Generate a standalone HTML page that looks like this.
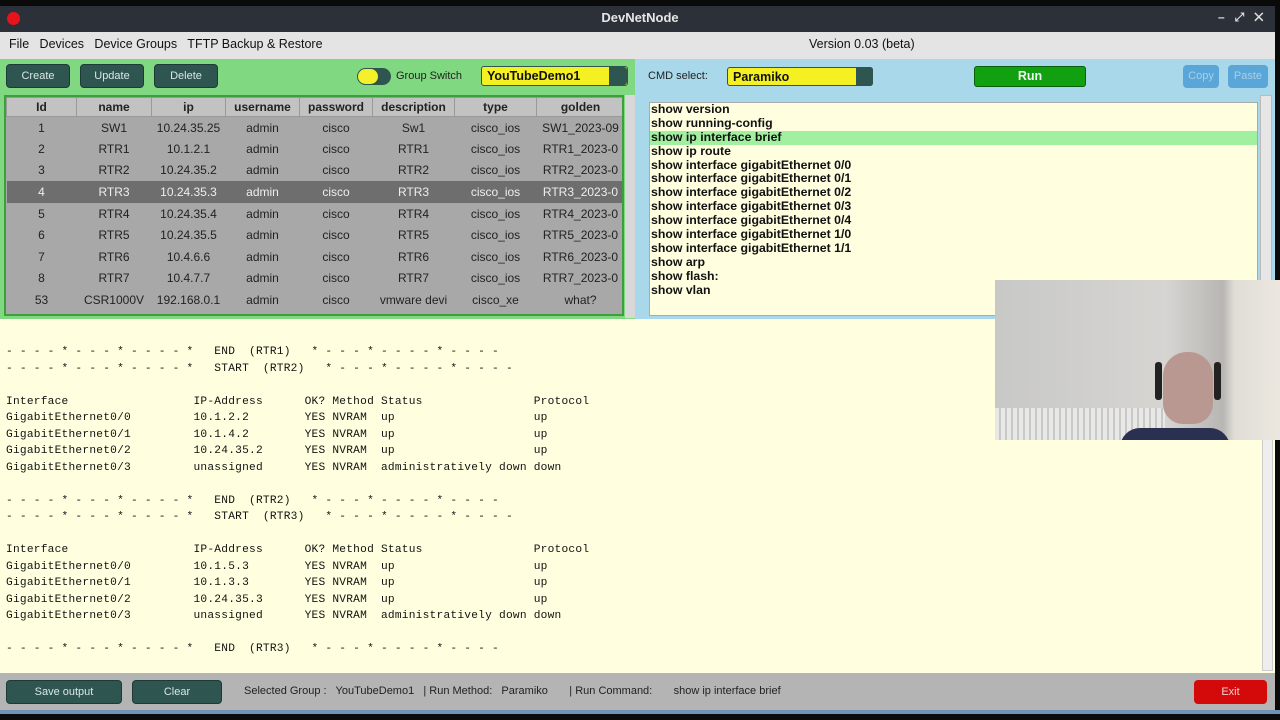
<!DOCTYPE html>
<html><head><meta charset="utf-8"><style>
*{margin:0;padding:0;box-sizing:border-box}
body{width:1280px;height:720px;overflow:hidden;background:#0a0a0a;font-family:"Liberation Sans",sans-serif;position:relative}
.abs{position:absolute}
.btn{position:absolute;background:#2f5550;color:#d8e8e4;font-size:11px;text-align:center;border-radius:4px;border:1px solid #1e3a36}
table{border-collapse:collapse}
td{font-size:12px;color:#222;text-align:center;height:21.6px;white-space:nowrap;overflow:hidden}
th{font-size:12px;font-weight:bold;color:#222;background:#c2c2c2;height:19px;border:1px solid #999}
.cmd div{height:13.9px;line-height:13.9px;font-weight:bold;font-size:12.3px;color:#111;padding-left:1px}
pre{font-family:"Liberation Mono",monospace;font-size:11.2px;line-height:16.5px;color:#111;letter-spacing:0.23px}
</style></head><body>
<div class="abs" style="left:0;top:6px;width:1275px;height:26px;background:#2c3038"></div>
<div class="abs" style="left:7px;top:12px;width:13px;height:13px;border-radius:50%;background:#e8121a"></div>
<div class="abs" style="left:0;top:10px;width:1280px;text-align:center;color:#e6e6e6;font-weight:bold;font-size:13px">DevNetNode</div>
<div class="abs" style="left:1218px;top:10px;color:#ddd;font-size:12px;font-weight:bold;white-space:nowrap">–&nbsp;&nbsp;&nbsp;⤢&nbsp;&nbsp;&nbsp;✕</div>
<div class="abs" style="left:0;top:32px;width:1275px;height:27px;background:#e4e4e4"></div>
<div class="abs" style="left:9px;top:37px;font-size:12.5px;color:#111;white-space:pre">File   Devices   Device Groups   TFTP Backup &amp; Restore</div>
<div class="abs" style="left:809px;top:37px;font-size:12.5px;color:#111">Version 0.03 (beta)</div>
<!-- left panel -->
<div class="abs" style="left:0;top:59px;width:635px;height:260px;background:#80d880"></div>
<div class="btn" style="left:6px;top:64px;width:64px;height:24px;line-height:22px">Create</div>
<div class="btn" style="left:80px;top:64px;width:64px;height:24px;line-height:22px">Update</div>
<div class="btn" style="left:154px;top:64px;width:64px;height:24px;line-height:22px">Delete</div>
<div class="abs" style="left:357px;top:68px;width:34px;height:17px;border-radius:9px;background:#2f5550"></div>
<div class="abs" style="left:358px;top:69px;width:20px;height:15px;border-radius:8px;background:#f4f02a"></div>
<div class="abs" style="left:396px;top:69px;font-size:11px;color:#222;line-height:14px">Group Switch</div>
<div class="abs" style="left:481px;top:66px;width:147px;height:20px;background:#f4f022;border:1px solid #2f5550;border-radius:3px;font-size:12.5px;font-weight:bold;padding:2px 5px;color:#111">YouTubeDemo1</div>
<div class="abs" style="left:609px;top:67px;width:18px;height:18px;background:#2f5550;border-radius:0 3px 3px 0"></div>
<div class="abs" style="left:4px;top:95px;width:620px;height:221px;background:#a8a8a8;border:2px solid #3e9e3e;overflow:hidden">
<table style="width:618px;table-layout:fixed">
<colgroup><col style="width:70px"><col style="width:75px"><col style="width:74px"><col style="width:74px"><col style="width:73px"><col style="width:82px"><col style="width:82px"><col style="width:88px"></colgroup>
<tr><th>Id</th><th>name</th><th>ip</th><th>username</th><th>password</th><th>description</th><th>type</th><th>golden</th></tr>
<tr><td>1</td><td>SW1</td><td>10.24.35.25</td><td>admin</td><td>cisco</td><td>Sw1</td><td>cisco_ios</td><td>SW1_2023-09</td></tr>
<tr><td>2</td><td>RTR1</td><td>10.1.2.1</td><td>admin</td><td>cisco</td><td>RTR1</td><td>cisco_ios</td><td>RTR1_2023-0</td></tr>
<tr><td>3</td><td>RTR2</td><td>10.24.35.2</td><td>admin</td><td>cisco</td><td>RTR2</td><td>cisco_ios</td><td>RTR2_2023-0</td></tr>
<tr style="background:#6e6e6e"><td style="color:#eee">4</td><td style="color:#eee">RTR3</td><td style="color:#eee">10.24.35.3</td><td style="color:#eee">admin</td><td style="color:#eee">cisco</td><td style="color:#eee">RTR3</td><td style="color:#eee">cisco_ios</td><td style="color:#eee">RTR3_2023-0</td></tr>
<tr><td>5</td><td>RTR4</td><td>10.24.35.4</td><td>admin</td><td>cisco</td><td>RTR4</td><td>cisco_ios</td><td>RTR4_2023-0</td></tr>
<tr><td>6</td><td>RTR5</td><td>10.24.35.5</td><td>admin</td><td>cisco</td><td>RTR5</td><td>cisco_ios</td><td>RTR5_2023-0</td></tr>
<tr><td>7</td><td>RTR6</td><td>10.4.6.6</td><td>admin</td><td>cisco</td><td>RTR6</td><td>cisco_ios</td><td>RTR6_2023-0</td></tr>
<tr><td>8</td><td>RTR7</td><td>10.4.7.7</td><td>admin</td><td>cisco</td><td>RTR7</td><td>cisco_ios</td><td>RTR7_2023-0</td></tr>
<tr><td>53</td><td>CSR1000V</td><td>192.168.0.1</td><td>admin</td><td>cisco</td><td>vmware devi</td><td>cisco_xe</td><td>what?</td></tr>
</table></div>
<div class="abs" style="left:625px;top:95px;width:10px;height:223px;background:#d8d8d8"></div>
<!-- right panel -->
<div class="abs" style="left:635px;top:59px;width:640px;height:260px;background:#a8d8ea"></div>
<div class="abs" style="left:648px;top:69px;font-size:11px;color:#222;line-height:14px">CMD select:</div>
<div class="abs" style="left:727px;top:67px;width:146px;height:19px;background:#f4f022;border:1px solid #2f5550;border-radius:3px;font-size:12.5px;font-weight:bold;padding:2px 5px;color:#111">Paramiko</div>
<div class="abs" style="left:856px;top:67px;width:17px;height:19px;background:#2f5550;border-radius:0 3px 3px 0"></div>
<div class="abs" style="left:974px;top:66px;width:112px;height:21px;background:#10a010;border:1px solid #0a600a;border-radius:3px;color:#f4f4f4;font-weight:bold;font-size:12.5px;text-align:center;line-height:19px">Run</div>
<div class="abs" style="left:1183px;top:65px;width:36px;height:23px;background:#5aa6d8;border-radius:4px;color:#a8d0ea;font-size:11px;text-align:center;line-height:23px">Copy</div>
<div class="abs" style="left:1228px;top:65px;width:40px;height:23px;background:#5aa6d8;border-radius:4px;color:#a8d0ea;font-size:11px;text-align:center;line-height:23px">Paste</div>
<div class="abs cmd" style="left:649px;top:102px;width:609px;height:214px;background:#ffffe0;border:1px solid #aaa;padding-top:0">
<div>show version</div><div>show running-config</div><div style="background:#a0f0a0">show ip interface brief</div><div>show ip route</div><div>show interface gigabitEthernet 0/0</div><div>show interface gigabitEthernet 0/1</div><div>show interface gigabitEthernet 0/2</div><div>show interface gigabitEthernet 0/3</div><div>show interface gigabitEthernet 0/4</div><div>show interface gigabitEthernet 1/0</div><div>show interface gigabitEthernet 1/1</div><div>show arp</div><div>show flash:</div><div>show vlan</div></div>
<div class="abs" style="left:1260px;top:95px;width:12px;height:222px;background:#e6e6e6;border:1px solid #bbb"></div>
<!-- output -->
<div class="abs" style="left:0;top:319px;width:1275px;height:354px;background:#ffffe0;overflow:hidden">
<pre style="position:absolute;left:6px;top:-8px">- - - - * - - - * - - - - *   - - - - - - - -   - - - - - - - - - - - - - - -

- - - - * - - - * - - - - *   END  (RTR1)   * - - - * - - - - * - - - -
- - - - * - - - * - - - - *   START  (RTR2)   * - - - * - - - - * - - - -

Interface                  IP-Address      OK? Method Status                Protocol
GigabitEthernet0/0         10.1.2.2        YES NVRAM  up                    up
GigabitEthernet0/1         10.1.4.2        YES NVRAM  up                    up
GigabitEthernet0/2         10.24.35.2      YES NVRAM  up                    up
GigabitEthernet0/3         unassigned      YES NVRAM  administratively down down

- - - - * - - - * - - - - *   END  (RTR2)   * - - - * - - - - * - - - -
- - - - * - - - * - - - - *   START  (RTR3)   * - - - * - - - - * - - - -

Interface                  IP-Address      OK? Method Status                Protocol
GigabitEthernet0/0         10.1.5.3        YES NVRAM  up                    up
GigabitEthernet0/1         10.1.3.3        YES NVRAM  up                    up
GigabitEthernet0/2         10.24.35.3      YES NVRAM  up                    up
GigabitEthernet0/3         unassigned      YES NVRAM  administratively down down

- - - - * - - - * - - - - *   END  (RTR3)   * - - - * - - - - * - - - -</pre>
<div class="abs" style="left:1262px;top:2px;width:11px;height:350px;background:#eee;border:1px solid #ccc"></div>
</div>
<!-- webcam -->
<div class="abs" style="left:995px;top:280px;width:285px;height:160px;background:linear-gradient(90deg,#c8c8c6,#d6d5d2 60%,#b8b6b2 80%,#e0ddd6 84%,#ece8e0);overflow:hidden">
<div class="abs" style="left:0;top:128px;width:170px;height:32px;background:repeating-linear-gradient(90deg,#e8e8e6 0 4px,#c8c8c6 4px 6px)"></div>
<div class="abs" style="left:168px;top:72px;width:50px;height:72px;border-radius:24px 24px 20px 20px;background:#b89890"></div>
<div class="abs" style="left:125px;top:148px;width:110px;height:20px;border-radius:30px 30px 0 0;background:#2a3050"></div>
<div class="abs" style="left:160px;top:82px;width:7px;height:38px;background:#222;border-radius:3px"></div>
<div class="abs" style="left:219px;top:82px;width:7px;height:38px;background:#222;border-radius:3px"></div>
</div>
<!-- bottom bar -->
<div class="abs" style="left:0;top:673px;width:1275px;height:37px;background:#b4b4b4"></div>
<div class="btn" style="left:6px;top:680px;width:116px;height:24px;line-height:22px">Save output</div>
<div class="btn" style="left:132px;top:680px;width:90px;height:24px;line-height:22px">Clear</div>
<div class="abs" style="left:244px;top:685px;font-size:11px;color:#222;white-space:pre">Selected Group :   YouTubeDemo1   | Run Method:   Paramiko       | Run Command:       show ip interface brief</div>
<div class="abs" style="left:1194px;top:680px;width:73px;height:24px;background:#d40a0a;border-radius:4px;color:#f0d0d0;font-size:11px;text-align:center;line-height:24px">Exit</div>
<div class="abs" style="left:0;top:710px;width:1280px;height:4px;background:#7090b8"></div>
</body></html>
